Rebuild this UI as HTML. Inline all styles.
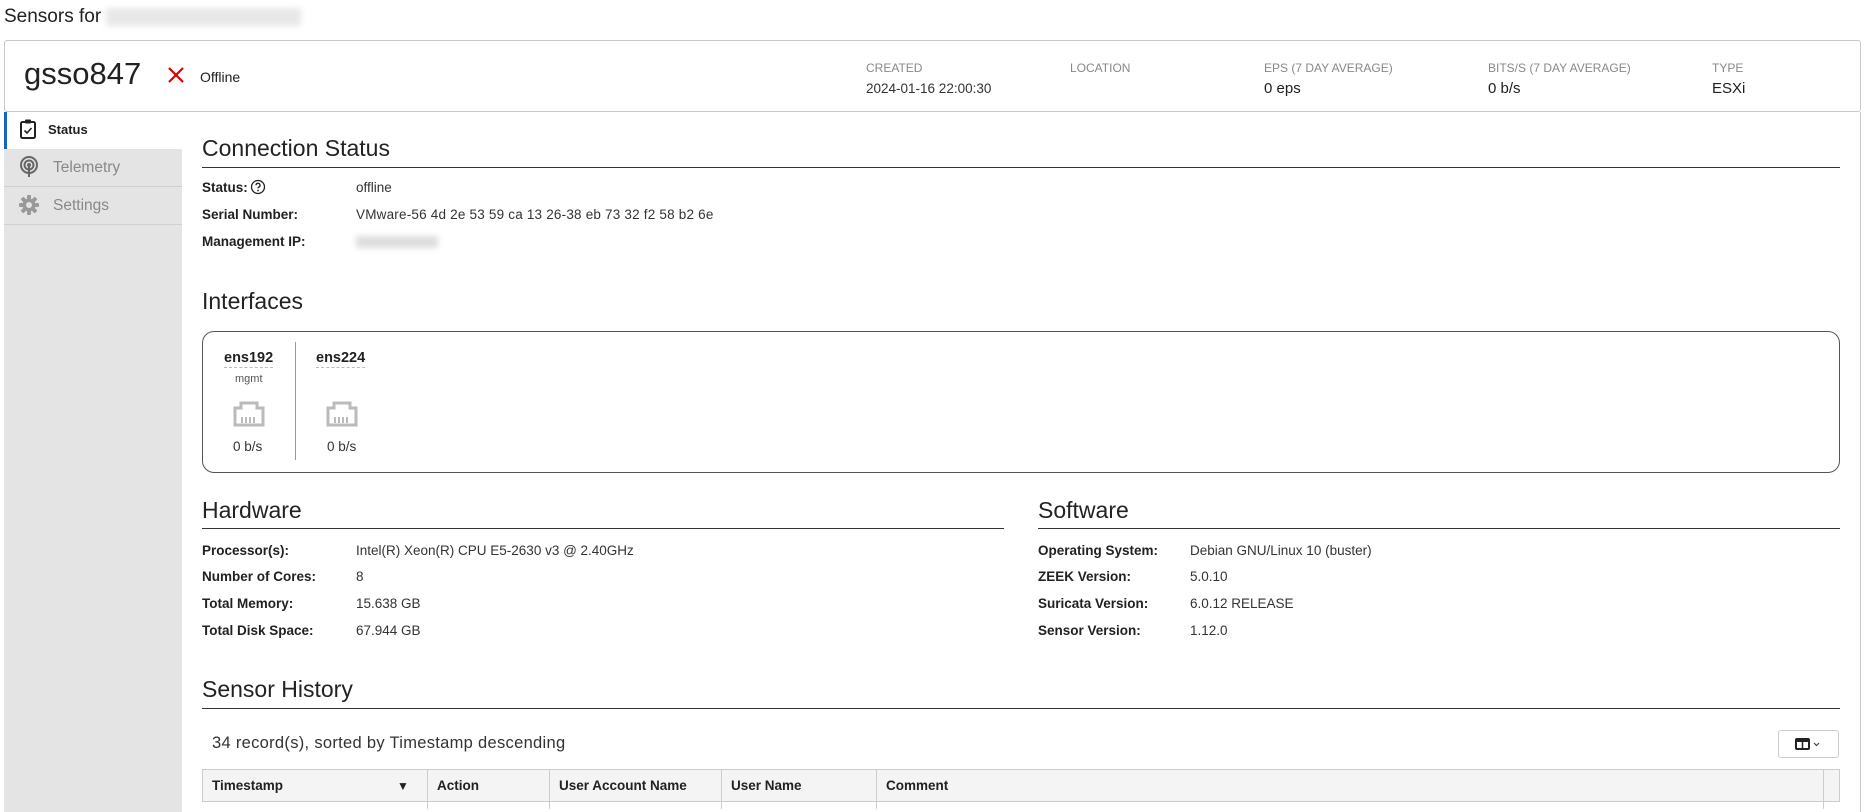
<!DOCTYPE html>
<html><head><meta charset="utf-8"><style>
*{box-sizing:border-box;margin:0;padding:0}
body{width:1866px;height:804px;overflow:hidden;background:#fff;font-family:"Liberation Sans",Arial,sans-serif;color:#212121;position:relative}
.a{position:absolute;white-space:nowrap}
.lbl{font-weight:bold;font-size:13.5px;color:#212121}
.val{font-size:13.5px;color:#333}
.h{font-size:23px;color:#222}
.line{position:absolute;height:1px;background:#333}
.hd{font-size:12px;color:#888}
</style></head><body>
<div class="a" style="left:4px;top:6px;font-size:19px">Sensors for <span style="display:inline-block;width:195px;height:18px;background:#e8e8e8;filter:blur(3px);vertical-align:middle"></span></div>
<div class="a" style="left:4px;top:40px;width:1857px;height:72px;border:1px solid #c8c8c8;border-radius:3px"></div>
<div class="a" style="left:24px;top:56px;font-size:31px;color:#222">gsso847</div>
<svg class="a" style="left:167px;top:66px" width="18" height="18" viewBox="0 0 18 18"><path d="M2 2L16 16M16 2L2 16" stroke="#d00" stroke-width="2.2"/></svg>
<div class="a" style="left:200px;top:69px;font-size:14px">Offline</div>
<div class="a hd" style="left:866px;top:61px">CREATED</div>
<div class="a val" style="left:866px;top:81px">2024-01-16 22:00:30</div>
<div class="a hd" style="left:1070px;top:61px">LOCATION</div>
<div class="a hd" style="left:1264px;top:61px">EPS (7 DAY AVERAGE)</div>
<div class="a" style="left:1264px;top:80px;font-size:15px">0 eps</div>
<div class="a hd" style="left:1488px;top:61px">BITS/S (7 DAY AVERAGE)</div>
<div class="a" style="left:1488px;top:80px;font-size:15px">0 b/s</div>
<div class="a hd" style="left:1712px;top:61px">TYPE</div>
<div class="a" style="left:1712px;top:80px;font-size:15px">ESXi</div>
<div class="a" style="left:4px;top:112px;width:178px;height:700px;background:#e4e4e4"></div>
<div class="a" style="left:4px;top:112px;width:178px;height:37px;background:#fff;border-left:3px solid #1565c0"></div>
<div class="a" style="left:4px;top:149px;width:178px;height:38px;border-bottom:1px solid #d0d0d0"></div>
<div class="a" style="left:4px;top:187px;width:178px;height:38px;border-bottom:1px solid #d0d0d0"></div>
<svg class="a" style="left:19px;top:118px" width="18" height="22" viewBox="0 0 18 22"><rect x="2" y="4" width="14" height="16" rx="1.5" fill="none" stroke="#222" stroke-width="2"/><rect x="6" y="1.5" width="6" height="4" rx="1" fill="#222"/><path d="M5.5 12.5l2.5 2.5 4.5-5" fill="none" stroke="#222" stroke-width="1.6"/></svg>
<div class="a" style="left:48px;top:122px;font-size:13px;font-weight:bold">Status</div>
<svg class="a" style="left:18px;top:156px" width="22" height="22" viewBox="0 0 22 22"><circle cx="11" cy="9" r="8" fill="none" stroke="#666" stroke-width="2"/><circle cx="11" cy="9" r="4.5" fill="none" stroke="#666" stroke-width="2"/><circle cx="11" cy="9" r="2" fill="#666"/><rect x="10" y="9" width="2" height="12" fill="#666"/></svg>
<div class="a" style="left:53px;top:159px;font-size:15.5px;color:#888">Telemetry</div>
<svg class="a" style="left:19px;top:195px" width="20" height="20" viewBox="0 0 20 20"><g fill="#999"><circle cx="10" cy="10" r="6.5"/><rect x="8" y="0" width="4" height="20" rx="1"/><rect x="0" y="8" width="20" height="4" rx="1"/><rect x="8" y="0" width="4" height="20" rx="1" transform="rotate(45 10 10)"/><rect x="8" y="0" width="4" height="20" rx="1" transform="rotate(-45 10 10)"/></g><circle cx="10" cy="10" r="3" fill="#e4e4e4"/></svg>
<div class="a" style="left:53px;top:197px;font-size:15.5px;color:#888">Settings</div>
<div class="a" style="left:1860px;top:112px;width:1px;height:700px;background:#c8c8c8"></div>
<div class="a h" style="left:202px;top:135px">Connection Status</div>
<div class="line" style="left:202px;top:167px;width:1638px"></div>
<div class="a lbl" style="left:202px;top:180px">Status:</div>
<svg class="a" style="left:250px;top:179px" width="16" height="16" viewBox="0 0 16 16"><circle cx="8" cy="8" r="6.5" fill="none" stroke="#222" stroke-width="1.3"/><path d="M6 6.3a2 2 0 1 1 2.6 1.9c-.5.2-.6.6-.6 1.2" fill="none" stroke="#222" stroke-width="1.3"/><circle cx="8" cy="11.5" r=".9" fill="#222"/></svg>
<div class="a val" style="left:356px;top:180px">offline</div>
<div class="a lbl" style="left:202px;top:207px">Serial Number:</div>
<div class="a val" style="left:356px;top:207px;letter-spacing:0.2px">VMware-56 4d 2e 53 59 ca 13 26-38 eb 73 32 f2 58 b2 6e</div>
<div class="a lbl" style="left:202px;top:234px">Management IP:</div>
<div class="a" style="left:356px;top:236px;width:82px;height:12px;background:#ddd;filter:blur(3px)"></div>
<div class="a h" style="left:202px;top:288px">Interfaces</div>
<div class="a" style="left:202px;top:331px;width:1638px;height:142px;border:1px solid #555;border-radius:12px"></div>
<div class="a" style="left:295px;top:342px;width:1px;height:118px;background:#999"></div>
<div class="a" style="left:224px;top:350px;font-size:14.5px;font-weight:bold;border-bottom:1px dashed #bbb;padding-bottom:1px">ens192</div>
<div class="a" style="left:235px;top:373px;font-size:11px;color:#555">mgmt</div>
<div class="a" style="left:316px;top:350px;font-size:14.5px;font-weight:bold;border-bottom:1px dashed #bbb;padding-bottom:1px">ens224</div>
<svg class="a" style="left:232px;top:400px" width="34" height="28" viewBox="0 0 34 28"><path d="M9 3h16v5h6v17H3V8h6z" fill="none" stroke="#bbb" stroke-width="3"/><path d="M10 17v6M14 17v6M18 17v6M22 17v6" stroke="#bbb" stroke-width="2"/></svg>
<svg class="a" style="left:325px;top:400px" width="34" height="28" viewBox="0 0 34 28"><path d="M9 3h16v5h6v17H3V8h6z" fill="none" stroke="#bbb" stroke-width="3"/><path d="M10 17v6M14 17v6M18 17v6M22 17v6" stroke="#bbb" stroke-width="2"/></svg>
<div class="a" style="left:233px;top:439px;font-size:13.5px;color:#333">0 b/s</div>
<div class="a" style="left:327px;top:439px;font-size:13.5px;color:#333">0 b/s</div>
<div class="a h" style="left:202px;top:497px">Hardware</div>
<div class="line" style="left:202px;top:528px;width:802px"></div>
<div class="a h" style="left:1038px;top:497px">Software</div>
<div class="line" style="left:1038px;top:528px;width:802px"></div>
<div class="a lbl" style="left:202px;top:543px">Processor(s):</div><div class="a val" style="left:356px;top:543px">Intel(R) Xeon(R) CPU E5-2630 v3 @ 2.40GHz</div>
<div class="a lbl" style="left:202px;top:569px">Number of Cores:</div><div class="a val" style="left:356px;top:569px">8</div>
<div class="a lbl" style="left:202px;top:596px">Total Memory:</div><div class="a val" style="left:356px;top:596px">15.638 GB</div>
<div class="a lbl" style="left:202px;top:623px">Total Disk Space:</div><div class="a val" style="left:356px;top:623px">67.944 GB</div>
<div class="a lbl" style="left:1038px;top:543px">Operating System:</div><div class="a val" style="left:1190px;top:543px">Debian GNU/Linux 10 (buster)</div>
<div class="a lbl" style="left:1038px;top:569px">ZEEK Version:</div><div class="a val" style="left:1190px;top:569px">5.0.10</div>
<div class="a lbl" style="left:1038px;top:596px">Suricata Version:</div><div class="a val" style="left:1190px;top:596px">6.0.12 RELEASE</div>
<div class="a lbl" style="left:1038px;top:623px">Sensor Version:</div><div class="a val" style="left:1190px;top:623px">1.12.0</div>
<div class="a h" style="left:202px;top:676px">Sensor History</div>
<div class="line" style="left:202px;top:708px;width:1638px"></div>
<div class="a" style="left:212px;top:734px;font-size:16.5px;color:#333;letter-spacing:0.3px">34 record(s), sorted by Timestamp descending</div>
<div class="a" style="left:1778px;top:730px;width:61px;height:28px;border:1px solid #ccc;border-radius:3px"></div>
<svg class="a" style="left:1795px;top:738px" width="28" height="12" viewBox="0 0 28 12"><rect x="1" y="1" width="13" height="10" rx="1" fill="none" stroke="#222" stroke-width="2"/><rect x="1" y="1" width="13" height="3" fill="#222"/><line x1="7.5" y1="3" x2="7.5" y2="11" stroke="#222" stroke-width="1.5"/><path d="M19 5l2.5 2.5L24 5" fill="none" stroke="#444" stroke-width="1.2"/></svg>
<div class="a" style="left:202px;top:769px;width:1638px;height:33px;background:#f4f4f4;border:1px solid #ccc"></div>
<div class="a" style="left:427px;top:769px;width:1px;height:40px;background:#ccc"></div>
<div class="a" style="left:549px;top:769px;width:1px;height:40px;background:#ccc"></div>
<div class="a" style="left:721px;top:769px;width:1px;height:40px;background:#ccc"></div>
<div class="a" style="left:876px;top:769px;width:1px;height:40px;background:#ccc"></div>
<div class="a" style="left:1823px;top:769px;width:1px;height:40px;background:#ccc"></div>
<div class="a lbl" style="left:212px;top:778px">Timestamp</div>
<div class="a" style="left:397px;top:779px;font-size:12px">▼</div>
<div class="a lbl" style="left:437px;top:778px">Action</div>
<div class="a lbl" style="left:559px;top:778px">User Account Name</div>
<div class="a lbl" style="left:731px;top:778px">User Name</div>
<div class="a lbl" style="left:886px;top:778px">Comment</div>
</body></html>
